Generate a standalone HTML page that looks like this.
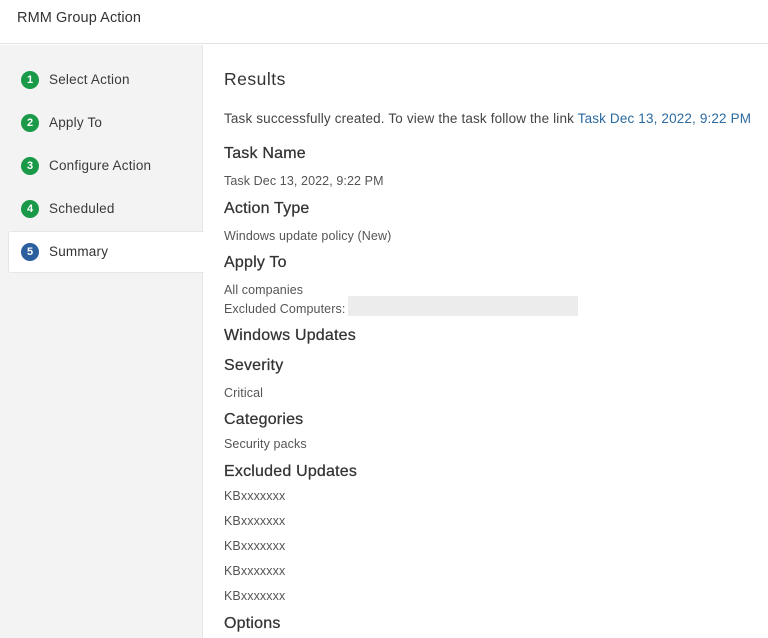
<!DOCTYPE html>
<html><head><meta charset="utf-8"><style>
*{margin:0;padding:0;box-sizing:border-box}
body{width:768px;height:638px;overflow:hidden;background:#fff;font-family:"Liberation Sans",sans-serif;color:#333;position:relative}
.a{position:absolute;white-space:nowrap;line-height:20px}
.hdr{position:absolute;left:0;top:0;width:768px;height:44px;border-bottom:1px solid #e2e2e2}
.side{position:absolute;left:0;top:45px;width:203px;height:593px;background:#f3f3f3;border-right:1px solid #e6e6e6}
.act{position:absolute;left:8px;top:231px;width:196px;height:42px;background:#fff;border:1px solid #e6e6e6;border-right:none;border-radius:3px 0 0 3px}
.c{position:absolute;left:21px;width:18px;height:18px;border-radius:50%;background:#1a9a48;color:#fff;font-size:11px;line-height:18px;text-align:center;font-weight:bold}
.s{left:49px;font-size:13.5px;color:#3a3a3a;letter-spacing:0.2px}
.h{left:224px;font-size:16px;color:#333;letter-spacing:0.2px;-webkit-text-stroke:0.25px #333}
.t{left:224px;font-size:12.5px;color:#555;letter-spacing:0.1px}
</style></head><body>
<div class="hdr"></div>
<div class="a" style="left:17px;top:8px;font-size:14.5px;color:#333;letter-spacing:0.1px">RMM Group Action</div>
<div class="side"></div>
<div class="act"></div>
<div class="c" style="top:71px">1</div><div class="a s" style="top:70px">Select Action</div>
<div class="c" style="top:114px">2</div><div class="a s" style="top:113px">Apply To</div>
<div class="c" style="top:157px">3</div><div class="a s" style="top:156px">Configure Action</div>
<div class="c" style="top:200px">4</div><div class="a s" style="top:199px">Scheduled</div>
<div class="c" style="top:243px;background:#2a5e9c">5</div><div class="a s" style="top:242px;color:#333">Summary</div>

<div class="a" style="left:224px;top:69px;font-size:17.5px;color:#333;letter-spacing:0.5px">Results</div>
<div class="a t" style="top:109px;font-size:13.5px;color:#444;letter-spacing:0.15px">Task successfully created. To view the task follow the link <span style="color:#2c6aa0">Task Dec 13, 2022, 9:22 PM</span></div>
<div class="a h" style="top:144px">Task Name</div>
<div class="a t" style="top:171px">Task Dec 13, 2022, 9:22 PM</div>
<div class="a h" style="top:199px">Action Type</div>
<div class="a t" style="top:226px">Windows update policy (New)</div>
<div class="a h" style="top:253px">Apply To</div>
<div class="a t" style="top:280px">All companies</div>
<div class="a t" style="top:299px">Excluded Computers:</div>
<div style="position:absolute;left:348px;top:296px;width:230px;height:20px;background:#ececec"></div>
<div class="a h" style="top:326px">Windows Updates</div>
<div class="a h" style="top:356px">Severity</div>
<div class="a t" style="top:383px">Critical</div>
<div class="a h" style="top:410px">Categories</div>
<div class="a t" style="top:434px">Security packs</div>
<div class="a h" style="top:462px">Excluded Updates</div>
<div class="a t" style="top:486px">KBxxxxxxx</div>
<div class="a t" style="top:511px">KBxxxxxxx</div>
<div class="a t" style="top:536px">KBxxxxxxx</div>
<div class="a t" style="top:561px">KBxxxxxxx</div>
<div class="a t" style="top:586px">KBxxxxxxx</div>
<div class="a h" style="top:614px">Options</div>
</body></html>
